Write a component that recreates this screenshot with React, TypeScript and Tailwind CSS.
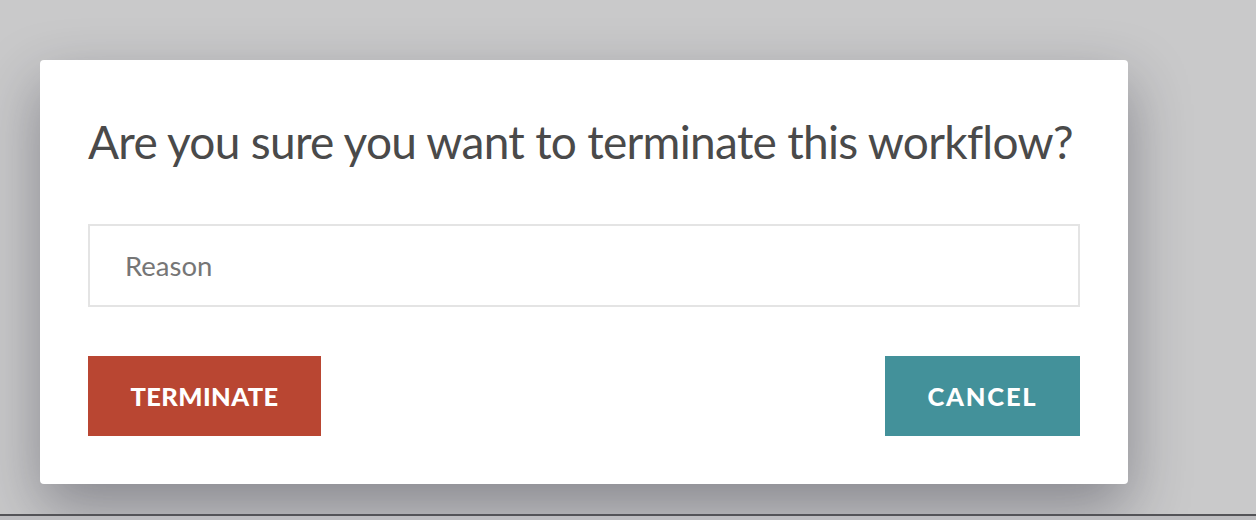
import React from "react";

export default function App() {
  return (
    <div
      className="flex h-[520px] w-full flex-col overflow-hidden bg-[#c9c9ca]"
      style={{ fontFamily: "Lato, 'Noto Sans', sans-serif" }}
    >
      <div className="relative flex-1">
        <div className="ml-[40px] mt-[60px] flex w-[1088px] flex-col rounded-[4px] bg-white px-[48px] pb-[48px] pt-[54px] shadow-[0_24px_60px_rgba(30,30,45,0.38)]">
          <h1 className="whitespace-nowrap text-[46px] font-normal leading-[56px] tracking-[-0.7px] text-[#4a4a4a]">
            Are you sure you want to terminate this workflow?
          </h1>
          <input
            type="text"
            placeholder="Reason"
            className="mt-[54px] h-[83px] w-full border-2 border-[#e4e4e4] bg-white pl-[35px] text-[27.5px] text-[#4a4a4a] outline-none placeholder:text-[#767676]"
          />
          <div className="mt-[49px] flex items-center justify-between">
            <button className="flex h-[80px] w-[233px] items-center justify-center bg-[#b94632] text-[25.5px] font-black tracking-[0.4px] text-white">
              TERMINATE
            </button>
            <button className="flex h-[80px] w-[195px] items-center justify-center bg-[#43919a] text-[25.5px] font-black tracking-[1.8px] text-white">
              CANCEL
            </button>
          </div>
        </div>
      </div>
      <div className="relative z-10 h-[2px] bg-[#535357]" />
      <div className="relative z-10 h-[4px] bg-[#bdbdc0]" />
    </div>
  );
}
